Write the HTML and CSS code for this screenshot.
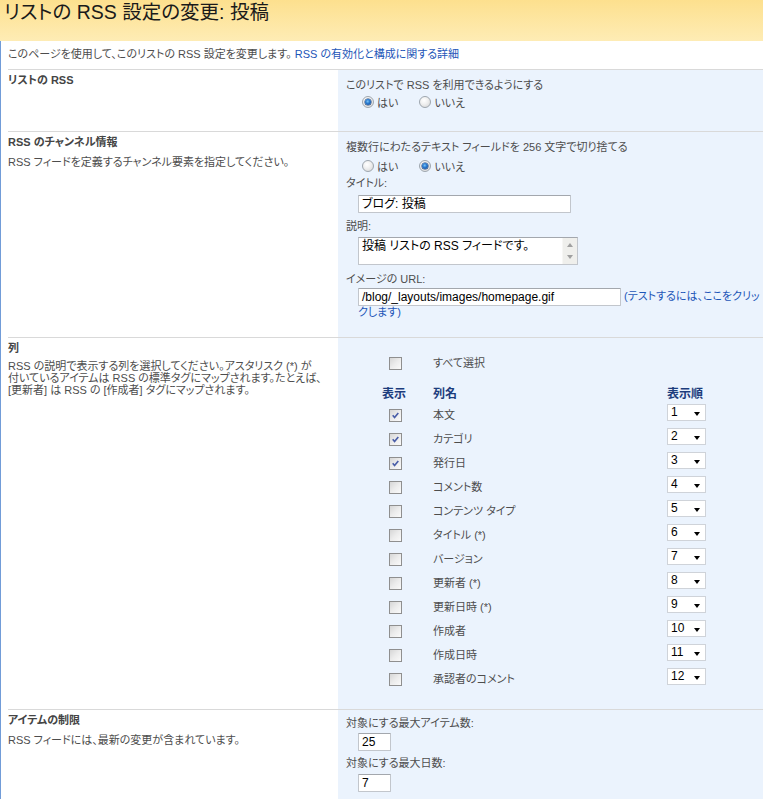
FILE: index.html
```html
<!DOCTYPE html>
<html lang="ja">
<head>
<meta charset="utf-8">
<title>リストの RSS 設定の変更: 投稿</title>
<link rel="stylesheet" href="styles.css">
</head>
<body>
<div class="titlebar"><h1 class="title">リストの RSS 設定の変更: 投稿</h1></div>
<div class="page">
  <div class="intro">このページを使用して、このリストの RSS 設定を変更します。 <a class="link" href="#">RSS の有効化と構成に関する詳細</a></div>

  <div class="section">
    <div class="left">
      <div class="stitle">リストの RSS</div>
    </div>
    <div class="right r1">
      <div class="rlabel">このリストで RSS を利用できるようにする</div>
      <div class="radios mt4">
        <label class="ropt"><span class="radio on"></span>はい</label>
        <label class="ropt"><span class="radio"></span>いいえ</label>
      </div>
    </div>
  </div>

  <div class="section">
    <div class="left">
      <div class="stitle">RSS のチャンネル情報</div>
      <div class="sdesc">RSS フィードを定義するチャンネル要素を指定してください。</div>
    </div>
    <div class="right r2">
      <div class="rlabel">複数行にわたるテキスト フィールドを 256 文字で切り捨てる</div>
      <div class="radios mt6">
        <label class="ropt"><span class="radio"></span>はい</label>
        <label class="ropt"><span class="radio on"></span>いいえ</label>
      </div>
      <div class="rlabel mt4">タイトル:</div>
      <div class="field w-title mt6">ブログ: 投稿</div>
      <div class="rlabel mt7">説明:</div>
      <div class="ta mt5">
        <div class="ta-text">投稿 リストの RSS フィードです。</div>
        <div class="sb"><span class="up"></span><span class="down"></span></div>
      </div>
      <div class="rlabel mt8">イメージの URL:</div>
      <div class="urlrow mt3"><span class="field w-url inl">/blog/_layouts/images/homepage.gif</span> <a class="link" href="#"><span class="nowrap">(テストするには、ここをクリッ</span><br>クします)</a></div>
    </div>
  </div>

  <div class="section">
    <div class="left">
      <div class="stitle">列</div>
      <div class="sdesc mt6">RSS の説明で表示する列を選択してください。アスタリスク (*) が<br>付いているアイテムは RSS の標準タグにマップされます。たとえば、<br>[更新者] は RSS の [作成者] タグにマップされます。</div>
    </div>
    <div class="right r3">
      <div class="crow">
        <span class="cb"></span>
        <span class="cname">すべて選択</span>
      </div>
      <div class="chead">
        <span>表示</span>
        <span>列名</span>
        <span>表示順</span>
      </div>
      <div class="crow"><span class="cb on"><svg viewBox="0 0 13 13"><path d="M3.2 6.2 L5.4 8.8 L9.8 3.6"/></svg></span><span class="cname">本文</span><span class="sel">1<i class="tri"></i></span></div>
      <div class="crow"><span class="cb on"><svg viewBox="0 0 13 13"><path d="M3.2 6.2 L5.4 8.8 L9.8 3.6"/></svg></span><span class="cname">カテゴリ</span><span class="sel">2<i class="tri"></i></span></div>
      <div class="crow"><span class="cb on"><svg viewBox="0 0 13 13"><path d="M3.2 6.2 L5.4 8.8 L9.8 3.6"/></svg></span><span class="cname">発行日</span><span class="sel">3<i class="tri"></i></span></div>
      <div class="crow"><span class="cb"></span><span class="cname">コメント数</span><span class="sel">4<i class="tri"></i></span></div>
      <div class="crow"><span class="cb"></span><span class="cname">コンテンツ タイプ</span><span class="sel">5<i class="tri"></i></span></div>
      <div class="crow"><span class="cb"></span><span class="cname">タイトル (*)</span><span class="sel">6<i class="tri"></i></span></div>
      <div class="crow"><span class="cb"></span><span class="cname">バージョン</span><span class="sel">7<i class="tri"></i></span></div>
      <div class="crow"><span class="cb"></span><span class="cname">更新者 (*)</span><span class="sel">8<i class="tri"></i></span></div>
      <div class="crow"><span class="cb"></span><span class="cname">更新日時 (*)</span><span class="sel">9<i class="tri"></i></span></div>
      <div class="crow"><span class="cb"></span><span class="cname">作成者</span><span class="sel">10<i class="tri"></i></span></div>
      <div class="crow"><span class="cb"></span><span class="cname">作成日時</span><span class="sel">11<i class="tri"></i></span></div>
      <div class="crow"><span class="cb"></span><span class="cname">承認者のコメント</span><span class="sel">12<i class="tri"></i></span></div>
    </div>
  </div>

  <div class="section">
    <div class="left">
      <div class="stitle">アイテムの制限</div>
      <div class="sdesc">RSS フィードには、最新の変更が含まれています。</div>
    </div>
    <div class="right r4">
      <div class="rlabel">対象にする最大アイテム数:</div>
      <div class="field w-num mt4">25</div>
      <div class="rlabel mt6">対象にする最大日数:</div>
      <div class="field w-num mt5">7</div>
    </div>
  </div>
</div>
</body>
</html>
```

FILE: styles.css
```css
html, body {
  margin: 0;
  padding: 0;
  background: #fff;
}
body {
  font-family: "Liberation Sans", "Noto Sans CJK JP", sans-serif;
  font-size: 11px;
  color: #4d4d4d;
  font-feature-settings: "palt";
}
.titlebar {
  height: 41px;
  background: linear-gradient(#fde08e, #feecb5);
  padding-left: 4px;
  box-sizing: border-box;
}
.title {
  margin: 0;
  font-size: 19.5px;
  font-weight: normal;
  line-height: 24px;
  color: #1a1a1a;
}
.page {
  border-left: 1px solid #719cd8;
  padding-left: 7px;
}
.intro {
  height: 28px;
  box-sizing: border-box;
  padding-top: 7px;
  line-height: 12px;
}
.link {
  color: #1d56b8;
  text-decoration: none;
}
.nowrap {
  white-space: nowrap;
}
.section {
  display: grid;
  grid-template-columns: 330px 1fr;
  border-top: 1px solid #d9d9d9;
}
.left {
  padding-top: 4px;
  padding-right: 10px;
}
.stitle {
  font-weight: bold;
  line-height: 12px;
  color: #444;
}
.sdesc {
  margin-top: 8px;
  line-height: 12px;
}
.right {
  background: #ebf3fd;
  padding: 9px 8px 0 8px;
}
.r1 { padding-bottom: 22px; }
.r2 { padding-bottom: 19px; }
.r3 { padding-top: 13px; padding-bottom: 18px; }
.r4 { padding-top: 7px; padding-bottom: 10px; }
.rlabel {
  line-height: 12px;
}
.mt3 { margin-top: 3px; }
.mt4 { margin-top: 4px; }
.mt5 { margin-top: 5px; }
.mt6 { margin-top: 6px; }
.mt7 { margin-top: 7px; }
.mt8 { margin-top: 8px; }

.radios {
  display: flex;
  align-items: center;
  height: 14px;
  padding-left: 16px;
}
.ropt {
  display: flex;
  align-items: center;
  gap: 3px;
  margin-right: 21px;
}
.radio {
  width: 12px;
  height: 12px;
  box-sizing: border-box;
  border-radius: 50%;
  border: 1px solid #9ea6ae;
  background: radial-gradient(circle at 40% 35%, #ffffff 0, #f1f1f1 40%, #d3d3d3 100%);
  display: flex;
  align-items: center;
  justify-content: center;
}
.radio.on::after {
  content: "";
  width: 6px;
  height: 6px;
  border-radius: 50%;
  background: radial-gradient(circle at 45% 40%, #7cc4f5 0, #2a7bd0 40%, #0b3f8c 100%);
  box-shadow: 0 0 0 0.5px #16386b;
}

.field {
  height: 18px;
  box-sizing: border-box;
  border: 1px solid #c2c6cc;
  border-top-color: #a3a7ad;
  border-radius: 1px;
  background: #fff;
  color: #000;
  font-size: 12px;
  line-height: 16px;
  padding-left: 3px;
  margin-left: 12px;
  white-space: nowrap;
  overflow: hidden;
}
.w-title { width: 213px; }
.w-num { width: 33px; }
.w-url { width: 263px; }
.inl {
  display: inline-block;
  vertical-align: middle;
  margin-left: 0;
}
.urlrow {
  padding-left: 12px;
  margin-right: -8px;
  line-height: 12px;
}

.ta {
  display: flex;
  width: 220px;
  height: 28px;
  box-sizing: border-box;
  margin-left: 12px;
  border: 1px solid #c2c6cc;
  border-top-color: #a3a7ad;
  background: #fff;
}
.ta-text {
  flex: 1;
  color: #000;
  font-size: 12px;
  line-height: 14px;
  padding: 1px 3px;
}
.sb {
  width: 15px;
  background: #efefec;
  border-left: 1px solid #f7f7f5;
  display: flex;
  flex-direction: column;
  align-items: center;
  justify-content: space-between;
  padding: 5px 0 5px;
  box-sizing: border-box;
}
.up {
  width: 0;
  height: 0;
  border-left: 3.5px solid transparent;
  border-right: 3.5px solid transparent;
  border-bottom: 4px solid #a0a0a0;
}
.down {
  width: 0;
  height: 0;
  border-left: 3.5px solid transparent;
  border-right: 3.5px solid transparent;
  border-top: 4px solid #a0a0a0;
}

.crow, .chead {
  display: grid;
  grid-template-columns: 51px 234px 39px;
  align-items: center;
  padding-left: 36px;
}
.crow {
  height: 24px;
}
.chead {
  height: 14px;
  line-height: 14px;
  margin-top: 12px;
  margin-bottom: 2px;
  font-weight: bold;
  color: #1c3c7c;
  font-size: 12px;
}
.cb {
  width: 13px;
  height: 13px;
  box-sizing: border-box;
  margin-left: 7px;
  border: 1px solid #8f8f8f;
  background: linear-gradient(135deg, #d6d6d6 0%, #ececec 50%, #fafafa 100%);
  display: flex;
}
.cb svg {
  width: 11px;
  height: 11px;
}
.cb svg path {
  fill: none;
  stroke: #4a5ea8;
  stroke-width: 2;
}
.cname {
  line-height: 12px;
}
.sel {
  align-self: start;
  margin-top: 1px;
  width: 39px;
  height: 17px;
  box-sizing: border-box;
  border: 1px solid #cfd3d9;
  background: #fff;
  display: flex;
  align-items: center;
  justify-content: space-between;
  padding: 0 5px 0 3px;
  color: #000;
  font-size: 12px;
  line-height: 15px;
}
.tri {
  width: 0;
  height: 0;
  margin-top: 3px;
  border-left: 3.5px solid transparent;
  border-right: 3.5px solid transparent;
  border-top: 4px solid #000;
}
```
